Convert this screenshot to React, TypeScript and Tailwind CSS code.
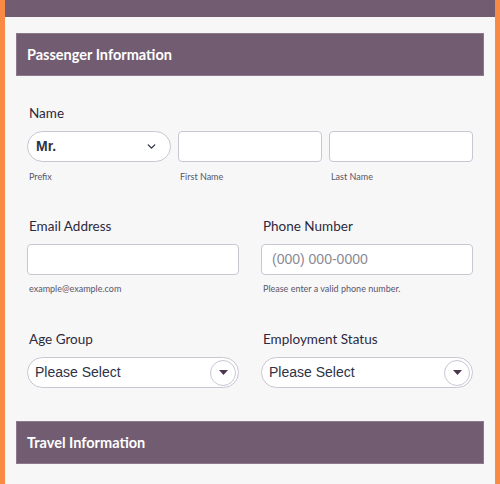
import { ChevronDown } from 'lucide-react';

function SelectPill({ text, className = '' }: { text: string; className?: string }) {
  return (
    <div
      className={`flex items-center justify-between h-[31px] rounded-full border border-[#c9c6d3] bg-white pl-[7px] pr-[2px] ${className}`}
    >
      <span className="text-[14px] text-[#2c3345] font-['Liberation_Sans',sans-serif]">{text}</span>
      <span className="flex items-center justify-center w-[26px] h-[26px] rounded-full border border-[#c9c6d3] bg-white">
        <svg width="9" height="6" viewBox="0 0 9 6">
          <polygon points="0,0 9,0 4.5,5" fill="#4b3650" />
        </svg>
      </span>
    </div>
  );
}

function TextBox({ placeholder }: { placeholder?: string }) {
  return (
    <div className="flex items-center h-[31px] rounded-[4px] border border-[#c9c6d3] bg-white px-[10px]">
      {placeholder && (
        <span className="text-[14px] text-[#8a8a96] font-['Liberation_Sans',sans-serif]">{placeholder}</span>
      )}
    </div>
  );
}

function SectionHeader({ title }: { title: string }) {
  return (
    <div className="flex items-center h-[43px] bg-[#725c72] border border-[#8c7a8c] px-[10px]">
      <span className="text-[14.5px] font-bold text-white">{title}</span>
    </div>
  );
}

export default function App() {
  return (
    <div className="w-[500px] h-[484px] bg-[#f98a43] px-[5px] overflow-hidden font-['Lato',sans-serif]">
      <div className="h-full bg-[#f8f7f8] flex flex-col">
        {/* Top bar */}
        <div className="h-[17px] bg-[#725c72] shrink-0" />

        <div className="px-[11px] pt-[16px]">
          <SectionHeader title="Passenger Information" />

          <div className="px-[11px]">
            {/* Name */}
            <div className="pt-[28px] text-[13.5px] text-[#2c2a3d] px-[2px] leading-[18px]">Name</div>
            <div className="grid grid-cols-3 gap-[7px] mt-[9px]">
              <div>
                <div className="flex items-center justify-between h-[31px] rounded-full border border-[#c9c6d3] bg-white pl-[8px] pr-[12px]">
                  <span className="text-[14px] font-bold text-[#2c3345] font-['Liberation_Sans',sans-serif]">Mr.</span>
                  <ChevronDown size={13} strokeWidth={2.5} className="text-[#2c3345]" />
                </div>
                <div className="text-[9px] text-[#57566a] mt-[8px] px-[2px]">Prefix</div>
              </div>
              <div>
                <TextBox />
                <div className="text-[9px] text-[#57566a] mt-[8px] px-[2px]">First Name</div>
              </div>
              <div>
                <TextBox />
                <div className="text-[9px] text-[#57566a] mt-[8px] px-[2px]">Last Name</div>
              </div>
            </div>

            {/* Email / Phone */}
            <div className="grid grid-cols-2 gap-[22px] mt-[33px]">
              <div>
                <div className="text-[13.5px] text-[#2c2a3d] px-[2px] leading-[18px]">Email Address</div>
                <div className="mt-[9px]">
                  <TextBox />
                </div>
                <div className="text-[9px] text-[#57566a] mt-[7px] px-[2px]">example@example.com</div>
              </div>
              <div>
                <div className="text-[13.5px] text-[#2c2a3d] px-[2px] leading-[18px]">Phone Number</div>
                <div className="mt-[9px]">
                  <TextBox placeholder="(000) 000-0000" />
                </div>
                <div className="text-[9px] text-[#57566a] mt-[7px] px-[2px]">Please enter a valid phone number.</div>
              </div>
            </div>

            {/* Age / Employment */}
            <div className="grid grid-cols-2 gap-[22px] mt-[35px]">
              <div>
                <div className="text-[13.5px] text-[#2c2a3d] px-[2px] leading-[18px]">Age Group</div>
                <SelectPill text="Please Select" className="mt-[9px]" />
              </div>
              <div>
                <div className="text-[13.5px] text-[#2c2a3d] px-[2px] leading-[18px]">Employment Status</div>
                <SelectPill text="Please Select" className="mt-[9px]" />
              </div>
            </div>
          </div>

          <div className="mt-[33px]">
            <SectionHeader title="Travel Information" />
          </div>
        </div>
      </div>
    </div>
  );
}
